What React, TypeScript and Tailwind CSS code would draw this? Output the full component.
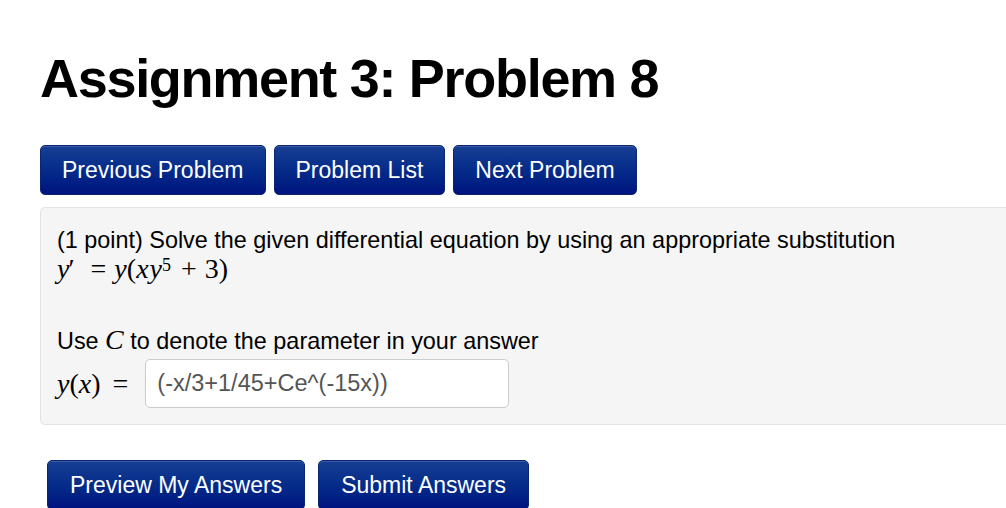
const NAV_BUTTONS = ["Previous Problem", "Problem List", "Next Problem"];

function BlueButton({ label, className = "" }: { label: string; className?: string }) {
  return (
    <button
      type="button"
      className={`h-[50px] rounded-[5px] border border-[#0b2670] bg-gradient-to-b from-[#163f93] to-[#00127f] text-[23px] leading-none text-white shadow-[inset_0_1px_0_rgba(255,255,255,0.15)] ${className}`}
    >
      {label}
    </button>
  );
}

function MathText({ children }: { children: React.ReactNode }) {
  return (
    <span className="font-['Liberation_Serif','Times_New_Roman',serif] text-[28px] leading-none">
      {children}
    </span>
  );
}

export default function App() {
  return (
    <div className="min-h-screen bg-white pl-[40px] font-['Liberation_Sans',Arial,sans-serif] text-black">
      <h1 className="pt-[49px] text-[54px] font-bold leading-[1.1] tracking-[-1.3px]">
        Assignment 3: Problem 8
      </h1>

      <div className="mt-[37px] flex gap-[8px]">
        {NAV_BUTTONS.map((b) => (
          <BlueButton key={b} label={b} className="px-[21px]" />
        ))}
      </div>

      <div className="mt-[12px] rounded-l-[5px] border border-r-0 border-[#e3e3e3] bg-[#f5f5f5] pb-[16px] pl-[16px] pt-[17px]">
        <div className="text-[23.4px] leading-[30px]">
          (1 point) Solve the given differential equation by using an appropriate substitution
        </div>
        <div className="text-[23.4px] leading-[30px]">
          <MathText>
            <i>y</i>
            <span className="-ml-[1px]">′</span>
            <span className="ml-[16px] mr-[8px]">=</span>
            <i>y</i>(<i>x</i>
            <i className="ml-[1px]">y</i>
            <sup className="-top-[7px] text-[18px]">5</sup>
            <span className="ml-[10px] mr-[8px]">+</span>3)
          </MathText>
        </div>
        <div className="h-[41px]" />
        <div className="text-[23.4px] leading-[30px]">
          Use{" "}
          <MathText>
            <i>C</i>
          </MathText>{" "}
          to denote the parameter in your answer
        </div>
        <div className="mt-[3px] flex items-center">
          <MathText>
            <i>y</i>(<i>x</i>)<span className="ml-[12px] mr-[17px]">=</span>
          </MathText>
          <div className="flex h-[49px] w-[364px] items-center rounded-[5px] border border-[#cccccc] bg-white px-[11px] text-[23.5px] text-[#555555]">
            (-x/3+1/45+Ce^(-15x))
          </div>
        </div>
      </div>

      <div className="ml-[7px] mt-[35px] flex gap-[13px]">
        <BlueButton label="Preview My Answers" className="px-[22px]" />
        <BlueButton label="Submit Answers" className="px-[22px]" />
      </div>
    </div>
  );
}
